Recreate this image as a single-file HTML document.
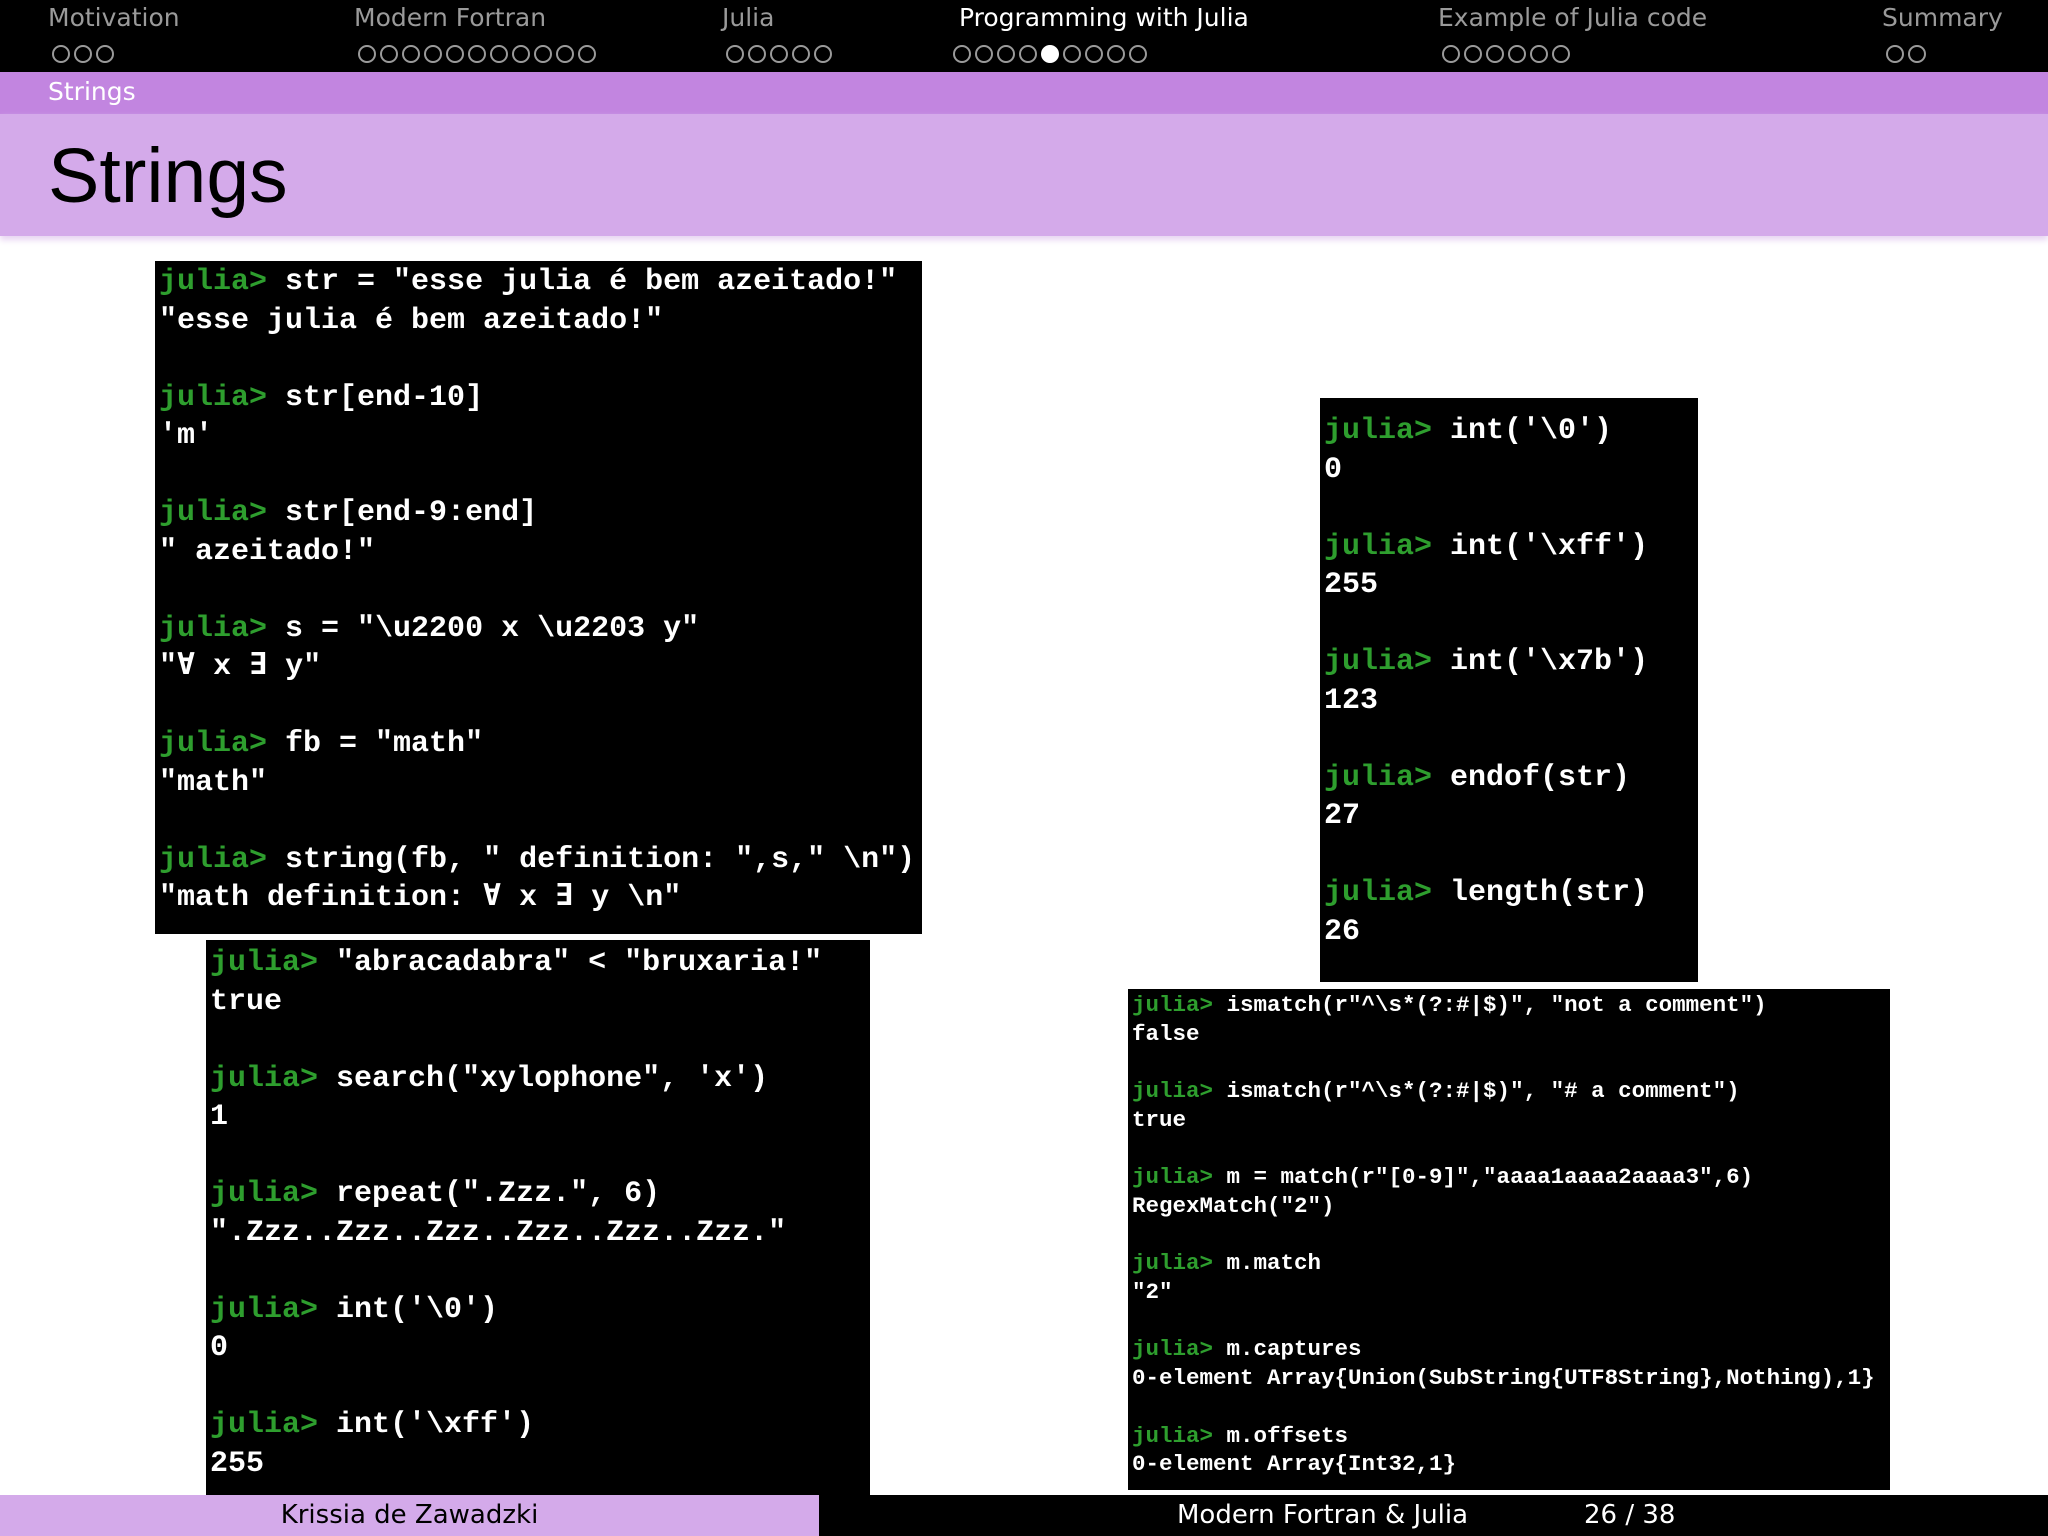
<!DOCTYPE html>
<html><head><meta charset="utf-8"><style>
*{margin:0;padding:0;box-sizing:border-box}
body{width:2048px;height:1536px;background:#fff;position:relative;overflow:hidden;font-family:"DejaVu Sans","Liberation Sans",sans-serif}
.nav{position:absolute;left:0;top:0;width:2048px;height:72px;background:#000}
.sec{position:absolute;top:3px;font-size:25px;color:#9a9a9a;white-space:nowrap}
.sec.act{color:#fff}
.dots{position:absolute;top:45px;height:18px;white-space:nowrap;font-size:0}
.d{display:inline-block;width:18px;height:18px;border:2px solid #9a9a9a;border-radius:50%;margin-right:4px}
.d.f{background:#fff;border-color:#fff}
.sub{position:absolute;left:0;top:72px;width:2048px;height:42px;background:#c285e0;color:#fff;font-size:25px;padding-left:48px;line-height:40px}
.title{position:absolute;left:0;top:114px;width:2048px;height:122px;background:#d4aaea;box-shadow:0 4px 6px #e8d4f2}
.title span{position:absolute;left:48px;top:18px;font-family:"Liberation Sans",sans-serif;font-size:77px;color:#000}
pre{position:absolute;background:#000;color:#fff;font-family:"Liberation Mono",monospace;font-weight:bold;white-space:pre}
.g{color:#2e9e2e}
.b1{left:155px;top:261px;width:767px;height:673px;font-size:30px;line-height:38.5px;padding:2px 0 0 4px}
.b2{left:206px;top:940px;width:664px;height:555px;font-size:30px;line-height:38.5px;padding:4px 0 0 4px}
.b3{left:1320px;top:398px;width:378px;height:584px;font-size:30px;line-height:38.5px;padding:14px 0 0 4px}
.b4{left:1128px;top:989px;width:762px;height:501px;font-size:22.5px;line-height:28.7px;padding:2px 0 0 4px}
.foot{position:absolute;top:1495px;height:41px;font-size:26px;line-height:41px}
</style></head><body>
<div class="nav">
<div class="sec" style="left:48px">Motivation</div>
<div class="sec" style="left:354px">Modern Fortran</div>
<div class="sec" style="left:722px">Julia</div>
<div class="sec act" style="left:959px">Programming with Julia</div>
<div class="sec" style="left:1438px">Example of Julia code</div>
<div class="sec" style="left:1882px">Summary</div>
<div class="dots" style="left:52px"><i class="d"></i><i class="d"></i><i class="d"></i></div>
<div class="dots" style="left:358px"><i class="d"></i><i class="d"></i><i class="d"></i><i class="d"></i><i class="d"></i><i class="d"></i><i class="d"></i><i class="d"></i><i class="d"></i><i class="d"></i><i class="d"></i></div>
<div class="dots" style="left:726px"><i class="d"></i><i class="d"></i><i class="d"></i><i class="d"></i><i class="d"></i></div>
<div class="dots" style="left:953px"><i class="d"></i><i class="d"></i><i class="d"></i><i class="d"></i><i class="d f"></i><i class="d"></i><i class="d"></i><i class="d"></i><i class="d"></i></div>
<div class="dots" style="left:1442px"><i class="d"></i><i class="d"></i><i class="d"></i><i class="d"></i><i class="d"></i><i class="d"></i></div>
<div class="dots" style="left:1886px"><i class="d"></i><i class="d"></i></div>
</div>
<div class="sub">Strings</div>
<div class="title"><span>Strings</span></div>

<pre class="b1"><span class="g">julia&gt;</span> str = "esse julia é bem azeitado!"
"esse julia é bem azeitado!"

<span class="g">julia&gt;</span> str[end-10]
'm'

<span class="g">julia&gt;</span> str[end-9:end]
" azeitado!"

<span class="g">julia&gt;</span> s = "\u2200 x \u2203 y"
"∀ x ∃ y"

<span class="g">julia&gt;</span> fb = "math"
"math"

<span class="g">julia&gt;</span> string(fb, " definition: ",s," \n")
"math definition: ∀ x ∃ y \n"</pre>

<pre class="b2"><span class="g">julia&gt;</span> "abracadabra" &lt; "bruxaria!"
true

<span class="g">julia&gt;</span> search("xylophone", 'x')
1

<span class="g">julia&gt;</span> repeat(".Zzz.", 6)
".Zzz..Zzz..Zzz..Zzz..Zzz..Zzz."

<span class="g">julia&gt;</span> int('\0')
0

<span class="g">julia&gt;</span> int('\xff')
255</pre>

<pre class="b3"><span class="g">julia&gt;</span> int('\0')
0

<span class="g">julia&gt;</span> int('\xff')
255

<span class="g">julia&gt;</span> int('\x7b')
123

<span class="g">julia&gt;</span> endof(str)
27

<span class="g">julia&gt;</span> length(str)
26</pre>

<pre class="b4"><span class="g">julia&gt;</span> ismatch(r"^\s*(?:#|$)", "not a comment")
false

<span class="g">julia&gt;</span> ismatch(r"^\s*(?:#|$)", "# a comment")
true

<span class="g">julia&gt;</span> m = match(r"[0-9]","aaaa1aaaa2aaaa3",6)
RegexMatch("2")

<span class="g">julia&gt;</span> m.match
"2"

<span class="g">julia&gt;</span> m.captures
0-element Array{Union(SubString{UTF8String},Nothing),1}

<span class="g">julia&gt;</span> m.offsets
0-element Array{Int32,1}</pre>

<div class="foot" style="left:0;width:819px;background:#d4aaea;text-align:center;color:#000">Krissia de Zawadzki</div>
<div class="foot" style="left:819px;width:1229px;background:#000;color:#fff">
<span style="position:absolute;left:358px">Modern Fortran &amp; Julia</span>
<span style="position:absolute;left:765px">26 / 38</span></div>
</body></html>
